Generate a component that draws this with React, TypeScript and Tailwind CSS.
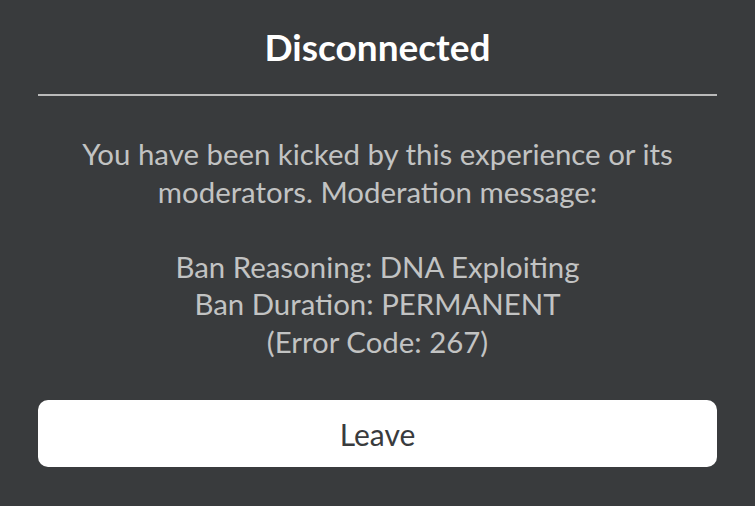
import React from "react";

export default function App() {
  return (
    <div
      className="w-[755px] h-[506px] bg-[#393b3d] flex flex-col items-center overflow-hidden"
      style={{ fontFamily: "Lato, 'Open Sans', sans-serif" }}
    >
      <div className="h-[94px] w-full flex items-center justify-center pb-[2px]">
        <h1 className="text-[37px] font-bold text-white leading-none">Disconnected</h1>
      </div>
      <div className="w-[679px] h-[2px] bg-[#bababa]" />
      <div className="mt-[39px] text-center text-[#c2c3c3] text-[29.4px] leading-[37.5px]">
        <p>You have been kicked by this experience or its</p>
        <p>moderators. Moderation message:</p>
        <p>&nbsp;</p>
        <p>Ban Reasoning: DNA Exploiting</p>
        <p>Ban Duration: PERMANENT</p>
        <p>(Error Code: 267)</p>
      </div>
      <button className="mt-[40px] w-[679px] h-[67px] rounded-[10px] bg-white text-[#393b3d] text-[30px] leading-none flex items-center justify-center">
        Leave
      </button>
    </div>
  );
}
